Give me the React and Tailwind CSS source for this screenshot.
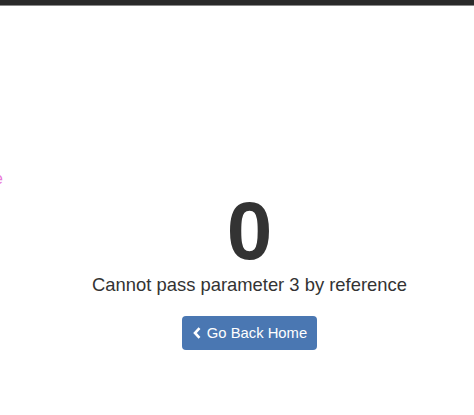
import React from "react";

export default function App() {
  return (
    <div className="relative w-[474px] h-[415px] bg-white overflow-hidden" style={{ fontFamily: '"Liberation Sans", Arial, sans-serif' }}>
      <div className="h-[6px] bg-[#2a2a2a] border-b border-[#8a8a8a]" />
      <span className="absolute left-[-6px] top-[167px] text-[16px] text-[#e040c8] opacity-70">e</span>
      <div className="flex flex-col items-center pt-[184px] pl-[25px] text-[#333]">
        <div className="text-[82px] font-bold leading-none">0</div>
        <div className="mt-[2px] text-[18.4px] leading-[22px]">Cannot pass parameter 3 by reference</div>
        <button className="mt-[20px] flex items-center gap-[5px] h-[34px] px-[10px] rounded-[4px] bg-[#4a77b2] text-white text-[14.8px]">
          <svg width="10" height="12" viewBox="0 0 10 12">
            <path d="M7.5 1.2 L3 6 L7.5 10.8" fill="none" stroke="white" strokeWidth="2.6" strokeLinejoin="miter" />
          </svg>
          <span>Go Back Home</span>
        </button>
      </div>
    </div>
  );
}
